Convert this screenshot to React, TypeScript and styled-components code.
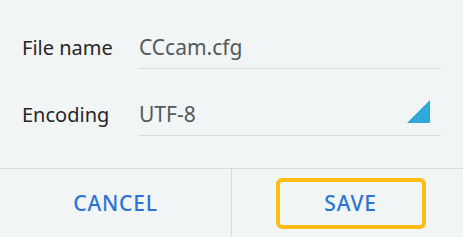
import React from 'react';
import styled, { createGlobalStyle } from 'styled-components';

const GlobalStyle = createGlobalStyle`
  html, body {
    margin: 0;
    padding: 0;
    background: #f1f5f6;
  }
  body {
    font-family: 'Noto Sans', 'Open Sans', sans-serif;
  }
`;

const Dialog = styled.div`
  width: 463px;
  height: 237px;
  background: #f1f5f6;
  display: flex;
  flex-direction: column;
`;

const Form = styled.div`
  display: flex;
  flex-direction: column;
  gap: 24px;
  padding: 26px 22px 32px 22px;
  border-bottom: 1px solid #d8dde0;
`;

const Row = styled.div`
  display: flex;
  align-items: center;
`;

const Label = styled.span`
  width: 117px;
  font-size: 20px;
  color: #262626;
`;

const Field = styled.div`
  flex: 1;
  height: 42px;
  display: flex;
  align-items: center;
  border-bottom: 1px solid #d6dbdd;
  font-size: 21px;
  color: #54595b;
`;

const Triangle = styled.div`
  margin-left: auto;
  margin-right: 11px;
  align-self: flex-end;
  margin-bottom: 12px;
  width: 0;
  height: 0;
  border-style: solid;
  border-width: 0 0 23px 23px;
  border-color: transparent transparent #2fa9da transparent;
`;

const ButtonBar = styled.div`
  flex: 1;
  display: grid;
  grid-template-columns: 232px 1fr;
`;

const Cell = styled.div<{ $divider?: boolean }>`
  display: flex;
  align-items: center;
  justify-content: center;
  border-right: ${(p) => (p.$divider ? '1px solid #d8dde0' : 'none')};
`;

const TextButton = styled.button<{ $focused?: boolean }>`
  font-family: 'Noto Sans', 'Open Sans', sans-serif;
  font-size: 21px;
  font-weight: 500;
  letter-spacing: 0.8px;
  color: #2c74d4;
  background: transparent;
  border: ${(p) => (p.$focused ? '4px solid #fbbd12' : '4px solid transparent')};
  border-radius: 6px;
  width: 150px;
  height: 51px;
  padding: 0;
  margin-left: ${(p) => (p.$focused ? '6px' : '0')};
`;

const App: React.FC = () => (
  <>
    <GlobalStyle />
    <Dialog>
      <Form>
        <Row>
          <Label>File name</Label>
          <Field>CCcam.cfg</Field>
        </Row>
        <Row>
          <Label>Encoding</Label>
          <Field>
            UTF-8
            <Triangle />
          </Field>
        </Row>
      </Form>
      <ButtonBar>
        <Cell $divider>
          <TextButton>CANCEL</TextButton>
        </Cell>
        <Cell>
          <TextButton $focused>SAVE</TextButton>
        </Cell>
      </ButtonBar>
    </Dialog>
  </>
);

export default App;
